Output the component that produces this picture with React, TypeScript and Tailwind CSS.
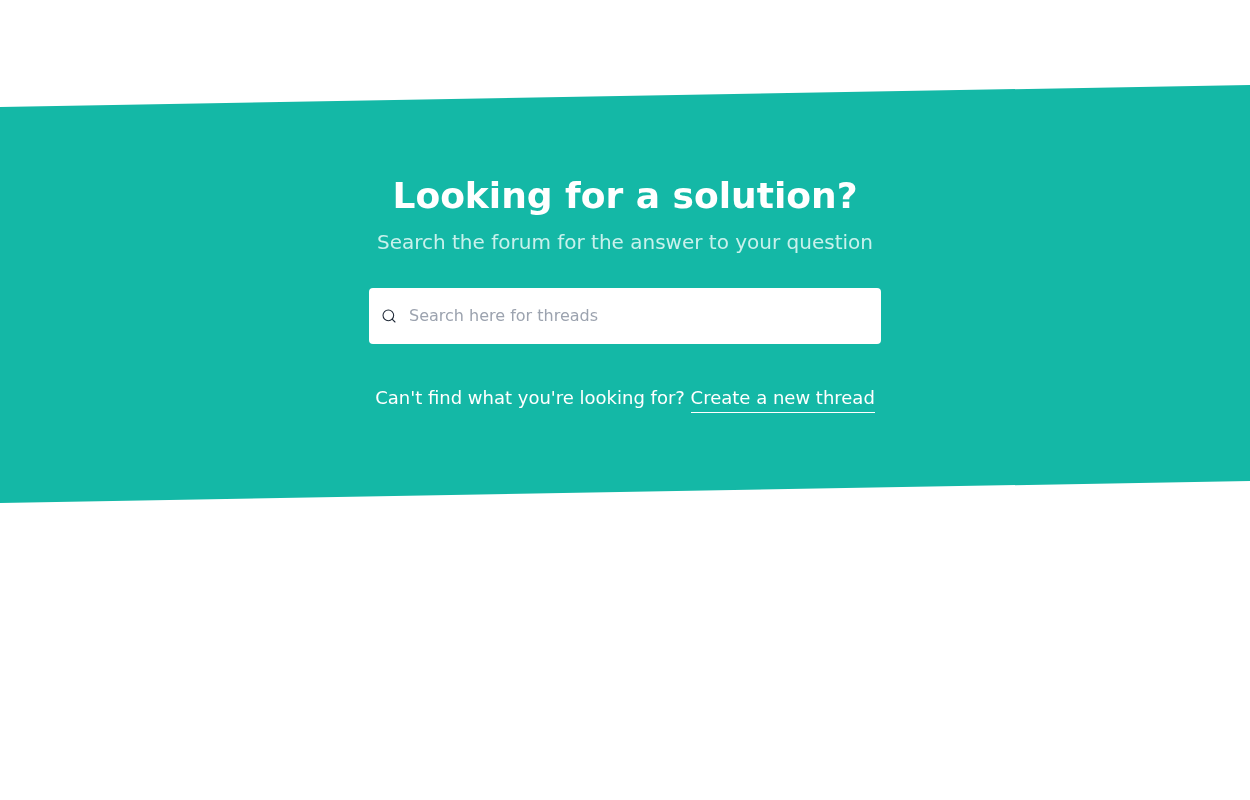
import { Search } from "lucide-react";

export default function App() {
  return (
    <div className="min-h-[800px] bg-white font-['DejaVu_Sans',sans-serif]">
      <div className="h-[85px]" />
      <section className="flex h-[418px] will-change-transform flex-col items-center bg-[#14b8a6] pt-[87px] [clip-path:polygon(0_22px,100%_0,100%_396px,0_100%)]">
        <h1 className="text-[36px] leading-[48px] font-bold text-white">Looking for a solution?</h1>
        <p className="mt-[8px] text-[20px] leading-[28px] text-[#c9f1ec]">Search the forum for the answer to your question</p>
        <div className="mt-[32px] flex h-[56px] w-[512px] items-center rounded bg-white pl-3">
          <Search className="h-4 w-4 text-[#1f2937]" strokeWidth={1.6} />
          <span className="ml-3 text-[16px] text-[#9ca3af]">Search here for threads</span>
        </div>
        <p className="mt-[40px] text-[18px] leading-[28px] text-white">
          Can't find what you're looking for?{" "}
          <a className="border-b border-white pb-1">Create a new thread</a>
        </p>
      </section>
    </div>
  );
}
